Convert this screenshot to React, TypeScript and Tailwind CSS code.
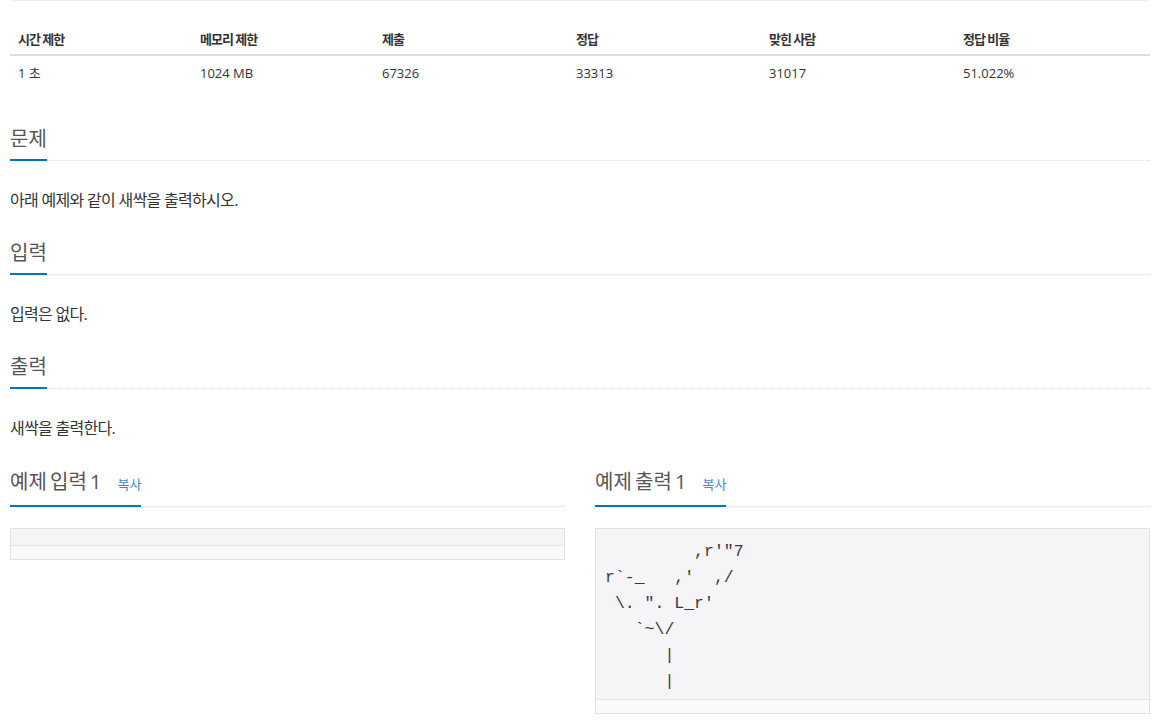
const font = { fontFamily: '"Open Sans", "Noto Sans CJK KR", sans-serif' }

const stats = [
  { label: "시간 제한", value: "1 초", w: "w-[182px]" },
  { label: "메모리 제한", value: "1024 MB", w: "w-[182px]" },
  { label: "제출", value: "67326", w: "w-[194px]" },
  { label: "정답", value: "33313", w: "w-[193px]" },
  { label: "맞힌 사람", value: "31017", w: "w-[194px]" },
  { label: "정답 비율", value: "51.022%", w: "flex-1" },
]

const art = `         ,r'"7
r\`-_   ,'  ,/
 \\. ". L_r'
   \`~\\/
      |
      |`

function Headline({ title, copy }: { title: string; copy?: boolean }) {
  return (
    <div className="flex border-b border-dotted border-[#dcdcdc]">
      <h2 className="-mb-px flex items-baseline border-b-2 border-[#0076c0] pb-[9px] text-[20px] leading-[23px] font-normal [word-spacing:-2px] text-[#555]">
        {title}
        {copy && <span className="ml-[16px] text-[13px] text-[#428bca] [word-spacing:0]">복사</span>}
      </h2>
    </div>
  )
}

function Section({ title, text }: { title: string; text: string }) {
  return (
    <section className="mt-[29px]">
      <Headline title={title} />
      <p className="mt-[27px] text-[16px] leading-[24px] tracking-[-0.7px] text-[#333]">{text}</p>
    </section>
  )
}

function SampleBox({ children, bodyClass }: { children?: React.ReactNode; bodyClass: string }) {
  return (
    <div className="mt-[21px] border border-[#e1e1e8] bg-[#f5f5f7]">
      <div className={bodyClass}>{children}</div>
      <div className="h-[14px] border-t border-[#e6e6e6] bg-[#fafafa]" />
    </div>
  )
}

export default function App() {
  return (
    <div className="flex min-h-[723px] flex-col bg-white pl-[10px] pr-[7px] text-[#333]" style={font}>
      <div className="h-px bg-[#eeeeee]" />

      <div className="mt-[21px]">
        <div className="flex border-b-2 border-[#dddddd]">
          {stats.map((s) => (
            <div
              key={s.label}
              className={`${s.w} px-[8px] pt-[8px] pb-[6px] text-[13px] leading-[18px] font-bold tracking-[-1px]`}
            >
              {s.label}
            </div>
          ))}
        </div>
        <div className="flex">
          {stats.map((s) => (
            <div key={s.label} className={`${s.w} px-[8px] py-[8px] text-[13px] leading-[18px]`}>
              {s.value}
            </div>
          ))}
        </div>
      </div>

      <div className="mt-[8px] flex flex-col">
        <Section title="문제" text="아래 예제와 같이 새싹을 출력하시오." />
        <Section title="입력" text="입력은 없다." />
        <Section title="출력" text="새싹을 출력한다." />
      </div>

      <div className="mt-[30px] grid grid-cols-2 gap-[30px]">
        <div>
          <Headline title="예제 입력 1" copy />
          <SampleBox bodyClass="h-[16px]" />
        </div>
        <div>
          <Headline title="예제 출력 1" copy />
          <SampleBox bodyClass="px-[9px] pt-[10px] pb-[4px]">
            <pre
              className="m-0 text-[16.5px] leading-[26px] text-[#3a3a3a]"
              style={{ fontFamily: '"Liberation Mono", monospace' }}
            >
              {art}
            </pre>
          </SampleBox>
        </div>
      </div>
    </div>
  )
}
